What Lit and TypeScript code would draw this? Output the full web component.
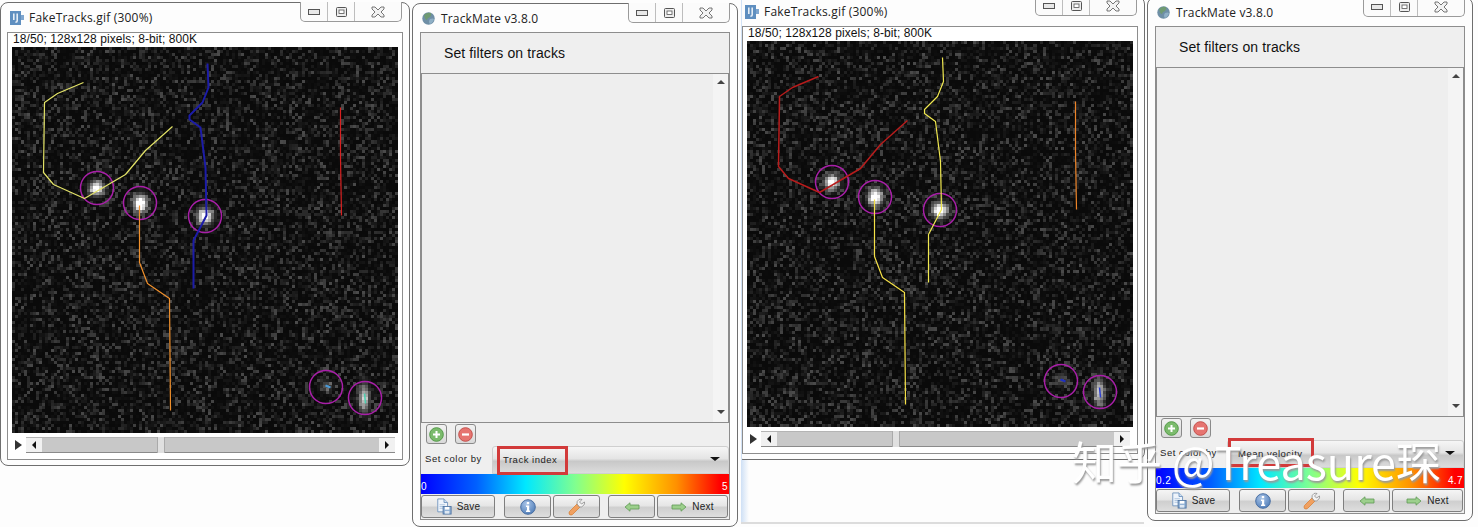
import { LitElement, html, css, svg } from "lit";
import { customElement, property } from "lit/decorators.js";

type Track = { color: string; width: number; pts: number[][] };
type Spot = { x: number; y: number; amp: number; sx: number; sy: number };

const CIRCLES = [[85, 141], [128, 156], [193, 169], [314, 340], [353, 351]];

const SPOTS: Spot[] = [
  { x: 85, y: 141, amp: 290, sx: 4.5, sy: 4.5 },
  { x: 128, y: 156, amp: 300, sx: 4.5, sy: 5.5 },
  { x: 193, y: 169, amp: 290, sx: 5, sy: 5 },
  { x: 314, y: 339, amp: 80, sx: 4, sy: 3.5 },
  { x: 352, y: 351, amp: 190, sx: 3.5, sy: 9 },
];

const PATHS = {
  hook: [[71, 35], [45, 46], [32, 55], [31, 125], [41, 137], [72, 151], [113, 127], [133, 103], [160, 79]],
  wave: [[195, 16], [196, 40], [190, 55], [177, 68], [177, 72], [188, 80], [193, 120], [194, 168], [181, 193], [181, 241]],
  long: [[127, 158], [127, 215], [135, 236], [157, 251], [158, 363]],
  line: [[328, 60], [328, 110], [329, 168]],
};

const LEFT_TRACKS: Track[] = [
  { color: "#e4e468", width: 1.2, pts: PATHS.hook },
  { color: "#1c1ca8", width: 2, pts: PATHS.wave },
  { color: "#f0902c", width: 1.2, pts: PATHS.long },
  { color: "#d82020", width: 1.2, pts: PATHS.line },
  { color: "#4a9ad8", width: 2, pts: [[313, 338], [318, 340]] },
  { color: "#4cd0b0", width: 1.5, pts: [[352, 346], [353, 356]] },
];

const RIGHT_TRACKS: Track[] = [
  { color: "#b81c1c", width: 1.5, pts: PATHS.hook },
  { color: "#f0e850", width: 1.2, pts: PATHS.wave },
  { color: "#f4e048", width: 1.2, pts: PATHS.long },
  { color: "#ee8428", width: 1.2, pts: PATHS.line },
  { color: "#1f2fc0", width: 2, pts: [[313, 338], [318, 340]] },
  { color: "#2c3fd0", width: 1.5, pts: [[352, 346], [353, 356]] },
];

const minIcon = svg`<svg width="12" height="6" viewBox="0 0 12 6"><rect x=".5" y=".5" width="11" height="5" fill="#e8e8e8" stroke="#555"/></svg>`;
const maxIcon = svg`<svg width="11" height="10" viewBox="0 0 11 10"><rect x=".5" y=".5" width="10" height="9" rx="1" fill="#eee" stroke="#555"/><rect x="3" y="3" width="5" height="3.5" fill="#fff" stroke="#555" stroke-width=".8"/></svg>`;
const closeIcon = svg`<svg width="14" height="12" viewBox="0 0 14 12"><path d="M1 1h3l3 3 3-3h3v2l-3 3 3 3v2h-3L7 8l-3 3H1V9l3-3-3-3z" fill="#f2f2f2" stroke="#666" stroke-width=".9"/></svg>`;

const ijIcon = svg`<svg width="14" height="14" viewBox="0 0 14 14"><rect width="11" height="14" fill="#5f8fc0"/><rect x="11" y="4" width="3" height="5" fill="#7fa6cf"/><path d="M3 2.500h1.600V9H3zM6.400 2.500H8V10q0 2-2.600 2v-1.400q1 0 1-.8z" fill="#e6eef6"/></svg>`;

const globeIcon = svg`<svg width="13" height="13" viewBox="0 0 13 13"><circle cx="6.500" cy="6.500" r="6.200" fill="#6f8fa6"/><path d="M2 3q3-3 7-2 1 2-1 4-3 1-3 3-2 0-3-5z" fill="#6f9a72"/><path d="M8 7q3-1 4 0-1 4-4 5-2-2 0-5z" fill="#8fb0c6"/></svg>`;

const plusIcon = svg`<svg width="15" height="15" viewBox="0 0 15 15"><circle cx="7.500" cy="7.500" r="6.800" fill="#7bbb6c" stroke="#549a48"/><path d="M7.500 4v7M4 7.500h7" stroke="#fff" stroke-width="2"/></svg>`;
const minusIcon = svg`<svg width="15" height="15" viewBox="0 0 15 15"><circle cx="7.500" cy="7.500" r="6.800" fill="#e67470" stroke="#c4504c"/><path d="M4 7.500h7" stroke="#fff" stroke-width="2.200"/></svg>`;

const saveIcon = svg`<svg width="16" height="17" viewBox="0 0 18 18"><path d="M2 .5h7l4 4V15H2z" fill="#eef4fb" stroke="#6f93bd"/><path d="M9 .5v4h4" fill="#cfe0f2" stroke="#6f93bd"/><path d="M4 7h6M4 9h5M4 11h4" stroke="#a9c1dc"/><rect x="8" y="9" width="9" height="8.500" fill="#8fb0d4" stroke="#4f74a2"/><rect x="10" y="9.500" width="5" height="3" fill="#fff"/><rect x="10" y="14" width="5" height="3" fill="#dfe8f2"/></svg>`;
const infoIcon = svg`<svg width="16" height="16" viewBox="0 0 16 16"><defs><radialGradient id="ib" cx=".4" cy=".3" r=".8"><stop offset="0" stop-color="#a8c4e8"/><stop offset="1" stop-color="#4a78b4"/></radialGradient></defs><circle cx="8" cy="8" r="7.300" fill="url(#ib)" stroke="#4a70a4"/><rect x="6.800" y="3" width="2.400" height="2.200" fill="#fff"/><path d="M6 6.500h3.200V11.500h1V13H6v-1.500h1V8H6z" fill="#fff"/></svg>`;
const wrenchIcon = svg`<svg width="18" height="18" viewBox="0 0 18 18"><path d="M1.500 13.500 9 6l3 3-7.500 7.500q-1.500 1-3 0-1-1.500 0-3z" fill="#f0a060" stroke="#d88238" stroke-width=".8"/><path d="M9 6q-.5-3 2-4.500 1.500-.5 3 0L11.500 4l2 2L16.500 4q.5 2-1 3.500-2 2-4 1.500z" fill="#f4f4f4" stroke="#8a8a8a" stroke-width=".8"/></svg>`;
const backIcon = svg`<svg width="16" height="10" viewBox="0 0 16 10"><path d="M15 3H6V.8L1 5l5 4.200V7h9z" fill="#9ccf8c" stroke="#5f9a55" stroke-width=".8"/></svg>`;
const nextIcon = svg`<svg width="16" height="10" viewBox="0 0 16 10"><path d="M1 3h9V.8L15 5l-5 4.200V7H1z" fill="#9ccf8c" stroke="#5f9a55" stroke-width=".8"/></svg>`;

const windowControls = html`<div class="controls">
  <span class="ctl">${minIcon}</span><span class="ctl">${maxIcon}</span><span class="ctl close">${closeIcon}</span>
</div>`;

const chrome = css`
  .controls {
    position: absolute;
    top: -1px;
    right: 7px;
    width: 102px;
    height: 20px;
    display: flex;
    box-sizing: border-box;
    border: 1px solid #9a9a9a;
    border-top: none;
    border-radius: 0 0 5px 5px;
    background: #fbfbfb;
  }
  .ctl { flex: 27; display: flex; align-items: center; justify-content: center; border-right: 1px solid #bdbdbd; }
  .ctl.close { flex: 47; border-right: none; }
`;

@customElement("image-window")
class ImageWindow extends LitElement {
  static styles = [chrome, css`
    :host { display: block; }
    .win {
      box-sizing: border-box;
      position: relative;
      width: 410px;
      height: 464px;
      padding: 0 6px 5px;
      display: flex;
      flex-direction: column;
      background: #fdfdfd;
      border: 1px solid #6e6e6e;
      border-radius: 8px;
    }
    .title {
      height: 29px;
      flex: none;
      display: flex;
      align-items: center;
      gap: 5px;
      padding: 0 3px;
      font: 12px "Open Sans", sans-serif;
      letter-spacing: .2px;
      color: #222;
    }
    .panel {
      flex: 1;
      display: flex;
      flex-direction: column;
      min-height: 0;
      padding: 0 4px;
      border: 1px solid #8d8d8d;
      background: #fff;
    }
    .status {
      height: 14px;
      padding-left: 1px;
      font: 12px/12px "Liberation Sans", sans-serif;
      letter-spacing: .08px;
      color: #111;
      white-space: nowrap;
    }
    .stage { position: relative; width: 386px; height: 386px; flex: none; }
    canvas { display: block; width: 386px; height: 386px; image-rendering: pixelated; filter: blur(.5px); }
    .stage svg { position: absolute; inset: 0; }
    .slider { display: flex; align-items: center; height: 20px; margin-top: 2px; gap: 4px; padding-left: 3px; }
    .play { width: 0; height: 0; border-left: 7px solid #333; border-top: 5px solid transparent; border-bottom: 5px solid transparent; }
    .bar {
      position: relative;
      flex: none;
      width: 369px;
      height: 16px;
      display: flex;
      justify-content: space-between;
      background: #c8c8c8;
      border-top: 1px solid #b4b4b4;
      border-bottom: 1px solid #8a8a8a;
      box-sizing: border-box;
    }
    .arrow { width: 16px; background: #f1f1f1; display: flex; align-items: center; justify-content: center; }
    .lt { width: 0; height: 0; border-right: 4px solid #111; border-top: 4px solid transparent; border-bottom: 4px solid transparent; }
    .rt { width: 0; height: 0; border-left: 4px solid #111; border-top: 4px solid transparent; border-bottom: 4px solid transparent; }
    .thumb { position: absolute; left: 131px; top: -1px; bottom: -1px; width: 6px; background: #e0e0e0; border-left: 1px solid #aaa; border-right: 1px solid #aaa; }
  `];

  @property({ type: Object }) tracks: Track[] = [];
  @property({ type: Number }) seed = 7;

  firstUpdated() {
    const canvas = this.renderRoot.querySelector("canvas") as HTMLCanvasElement;
    const ctx = canvas.getContext("2d")!;
    const img = ctx.createImageData(128, 128);
    let s = this.seed;
    const rand = () => {
      s = (s * 16807) % 2147483647;
      return s / 2147483647;
    };
    for (let y = 0; y < 128; y++) {
      for (let x = 0; x < 128; x++) {
        const r = rand();
        let v = 10 + r * r * r * r * 65;
        for (const p of SPOTS) {
          const dx = (x + 0.5) * 3.016 - p.x;
          const dy = (y + 0.5) * 3.016 - p.y;
          v += p.amp * Math.exp(-(dx * dx) / (2 * p.sx * p.sx) - (dy * dy) / (2 * p.sy * p.sy));
        }
        const i = (y * 128 + x) * 4;
        const c = Math.min(255, v);
        img.data[i] = c;
        img.data[i + 1] = c;
        img.data[i + 2] = c;
        img.data[i + 3] = 255;
      }
    }
    ctx.putImageData(img, 0, 0);
  }

  render() {
    return html`<div class="win">
      <div class="title">${ijIcon}<span>FakeTracks.gif (300%)</span></div>
      ${windowControls}
      <div class="panel">
        <div class="status">18/50; 128x128 pixels; 8-bit; 800K</div>
        <div class="stage">
          <canvas width="128" height="128"></canvas>
          <svg width="386" height="386" viewBox="0 0 386 386" fill="none">
            ${CIRCLES.map((c) => svg`<circle cx=${c[0]} cy=${c[1]} r="16.500" stroke="#a81fa8" stroke-width="1.500"/>`)}
            <g transform="translate(.5 .5)">
              ${this.tracks.map((t) => svg`<polyline points=${t.pts.map((p) => p.join(",")).join(" ")} stroke=${t.color} stroke-width=${t.width} stroke-linejoin="round"/>`)}
            </g>
          </svg>
        </div>
        <div class="slider">
          <span class="play"></span>
          <div class="bar">
            <span class="arrow"><span class="lt"></span></span>
            <span class="thumb"></span>
            <span class="arrow"><span class="rt"></span></span>
          </div>
        </div>
      </div>
    </div>`;
  }
}

@customElement("trackmate-window")
class TrackmateWindow extends LitElement {
  static styles = [chrome, css`
    :host { display: block; }
    .win {
      box-sizing: border-box;
      position: relative;
      width: 326px;
      height: 524px;
      padding: 0 7px 6px;
      display: flex;
      flex-direction: column;
      background: #fdfdfd;
      border: 1px solid #6e6e6e;
      border-radius: 8px;
    }
    .title {
      height: 28px;
      flex: none;
      display: flex;
      align-items: center;
      gap: 6px;
      padding: 0 2px;
      font: 12px "Open Sans", sans-serif;
      letter-spacing: .16px;
      color: #222;
    }
    .panel {
      flex: 1;
      display: flex;
      flex-direction: column;
      min-height: 0;
      border: 1px solid #8d8d8d;
      background: #efefef;
    }
    .head {
      height: 40px;
      flex: none;
      display: flex;
      align-items: center;
      padding-left: 23px;
      font: 14px "Liberation Sans", sans-serif;
      letter-spacing: .1px;
      color: #111;
    }
    .list {
      flex: 1;
      display: flex;
      justify-content: flex-end;
      min-height: 0;
      border: 1px solid #8d8d8d;
      background: #eee;
    }
    .rail { width: 15px; display: flex; flex-direction: column; justify-content: space-between; align-items: center; padding: 6px 0 8px; background: #f4f4f4; }
    .up { width: 0; height: 0; border-bottom: 4px solid #444; border-left: 4px solid transparent; border-right: 4px solid transparent; }
    .down { width: 0; height: 0; border-top: 4px solid #444; border-left: 4px solid transparent; border-right: 4px solid transparent; }
    .add { display: flex; flex: none; gap: 8px; box-sizing: border-box; padding: 1px 0 0 5px; height: 22px; }
    .small {
      width: 21px;
      height: 20px;
      box-sizing: border-box;
      display: flex;
      align-items: center;
      justify-content: center;
      border: 1px solid #8a8a8a;
      border-radius: 3px;
      background: linear-gradient(#f2f2f2, #d9d9d9);
    }
    .colorby { display: flex; flex: none; align-items: flex-end; height: 29px; }
    .colorby label {
      width: 71px;
      padding: 0 0 10px 4px;
      box-sizing: border-box;
      font: 9.500px "Liberation Sans", sans-serif;
      letter-spacing: .55px;
      color: #222;
    }
    .combo {
      position: relative;
      flex: 1;
      height: 28px;
      display: flex;
      align-items: center;
      justify-content: space-between;
      box-sizing: border-box;
      padding: 0 8px 2px 10px;
      font: 9.500px "Liberation Sans", sans-serif;
      letter-spacing: .5px;
      color: #222;
      border-radius: 3px 3px 0 0;
      border: 1px solid #cfcfcf;
      background: linear-gradient(#f6f6f6, #e4e4e4 45%, #c8c8c8 55%, #dcdcdc);
    }
    .caret { width: 0; height: 0; border-top: 4px solid #111; border-left: 5px solid transparent; border-right: 5px solid transparent; }
    .mark { position: absolute; height: 29px; box-sizing: border-box; border: 3px solid #d23a3a; }
    .scale {
      height: 20px;
      flex: none;
      display: flex;
      justify-content: space-between;
      align-items: flex-end;
      padding: 0 1px 2px 0;
      box-sizing: border-box;
      font: 10px/11px "Liberation Sans", sans-serif;
      letter-spacing: .4px;
      color: #fff;
      background: linear-gradient(90deg, #0000ff, #0060ff 18%, #00e8ff 34%, #80ff90 50%, #ffff00 66%, #ff9000 83%, #ff0000 97%);
    }
    .actions { display: flex; flex: none; box-sizing: border-box; height: 25px; padding: 1px 1px 0 0; gap: 2px; }
    .btn {
      box-sizing: border-box;
      height: 23px;
      display: flex;
      align-items: center;
      justify-content: center;
      gap: 5px;
      border: 1px solid #7f7f7f;
      border-radius: 3px;
      font: 10px "Liberation Sans", sans-serif;
      letter-spacing: .2px;
      color: #222;
      background: linear-gradient(#f5f5f5, #e6e6e6 45%, #cfcfcf 55%, #dedede);
    }
    .save { width: 74px; margin-right: 7px; }
    .info, .tool { width: 47px; }
    .tool { margin-right: 6px; }
    .back { width: 47px; }
    .next { width: 71px; }
  `];

  @property() metric = "";
  @property() low = "";
  @property() high = "";
  @property({ type: Array }) mark: number[] = [4, -1, 71];

  render() {
    const [x, y, w] = this.mark;
    return html`<div class="win">
      <div class="title">${globeIcon}<span>TrackMate v3.8.0</span></div>
      ${windowControls}
      <div class="panel">
        <div class="head">Set filters on tracks</div>
        <div class="list"><div class="rail"><span class="up"></span><span class="down"></span></div></div>
        <div class="add">
          <span class="small">${plusIcon}</span>
          <span class="small">${minusIcon}</span>
        </div>
        <div class="colorby">
          <label>Set color by</label>
          <div class="combo">
            <span>${this.metric}</span><span class="caret"></span>
            <span class="mark" style="left:${x}px;top:${y}px;width:${w}px"></span>
          </div>
        </div>
        <div class="scale"><span>${this.low}</span><span>${this.high}</span></div>
        <div class="actions">
          <span class="btn save">${saveIcon}Save</span>
          <span class="btn info">${infoIcon}</span>
          <span class="btn tool">${wrenchIcon}</span>
          <span class="btn back">${backIcon}</span>
          <span class="btn next">${nextIcon}Next</span>
        </div>
      </div>
    </div>`;
  }
}

@customElement("app-root")
class AppRoot extends LitElement {
  static styles = css`
    :host {
      display: block;
      position: relative;
      width: 1478px;
      height: 527px;
      overflow: hidden;
      background: #fdfdfd;
    }
    .place { position: absolute; }
    .image-left { left: 0; top: 2px; }
    .mate-left { left: 412px; top: 3px; z-index: 2; }
    .behind {
      left: 741px;
      top: 0;
      width: 403px;
      height: 524px;
      box-sizing: border-box;
      border-bottom: 2px solid #dcdcdc;
      background: linear-gradient(90deg, #cfe0f5, #fdfdfd 8px);
    }
    .image-right { left: 735px; top: -4px; clip-path: inset(0 0 0 7px); }
    .mate-right { left: 1147px; top: -3px; z-index: 2; }
    .watermark {
      position: absolute;
      z-index: 3;
      left: 1072px;
      top: 432px;
      font: 45px/58px "Noto Sans CJK SC", "Noto Sans", sans-serif;
      color: #fff;
      white-space: nowrap;
      text-shadow: 1px 2px 2px #9a9a9a;
    }
  `;

  render() {
    return html`
      <div class="place behind"></div>
      <image-window class="place image-left" .tracks=${LEFT_TRACKS} .seed=${1234}></image-window>
      <trackmate-window class="place mate-left" metric="Track index" low="0" high="5" .mark=${[4, -1, 71]}></trackmate-window>
      <image-window class="place image-right" .tracks=${RIGHT_TRACKS} .seed=${98765}></image-window>
      <trackmate-window class="place mate-right" metric="Mean velocity" low="0.2" high="4.7" .mark=${[0, -3, 86]}></trackmate-window>
      <div class="watermark">知乎 @Treasure琛</div>
    `;
  }
}
